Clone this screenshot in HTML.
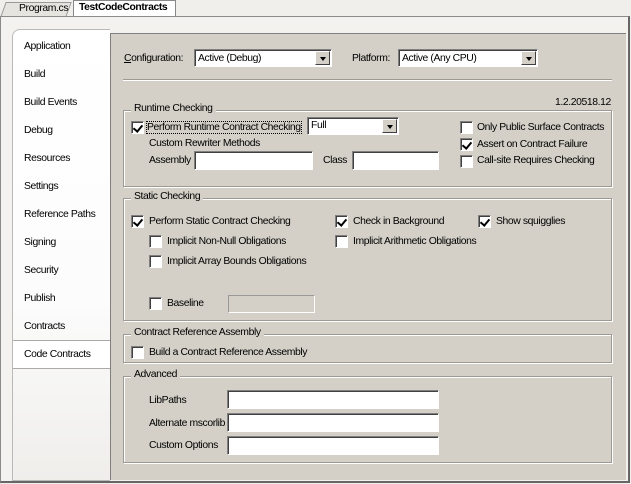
<!DOCTYPE html>
<html><head><style>
*{margin:0;padding:0;box-sizing:border-box}
body{width:631px;height:484px;background:#f0efec;font-family:"Liberation Sans",sans-serif;font-size:10.4px;color:#000;position:relative;overflow:hidden;letter-spacing:-0.4px}
.a{position:absolute;white-space:nowrap}
.frame{position:absolute;left:0;top:16px;width:630px;height:467px;border:1px solid #8a8a8a;background:#f3f2ef;border-right:2px solid #666;border-bottom:2px solid #666}
.left{position:absolute;left:12px;top:29px;width:98px;height:452px;background:linear-gradient(#fff,#fcfcfc 60%,#efeeeb);border:1px solid #b9b9b9;border-radius:8px 0 0 0;border-right:none}
.panel{position:absolute;left:110px;top:33px;width:516px;height:447px;background:#d4d0c8;border-left:1px solid #808080;border-top:1px solid #808080}
.grp{position:absolute;border:1px solid #9d9a94;box-shadow:1px 1px 0 #fff inset,1px 1px 0 #fff}
.lg{position:absolute;top:-8px;left:7px;background:#d4d0c8;padding:0 3px}
.tb{position:absolute;background:#fff;border:1px solid;border-color:#808080 #fff #fff #808080;box-shadow:inset 1px 1px 0 #404040}
.tb.dis{background:#d4d0c8}
.cb{position:absolute;width:13px;height:13px;background:#fff;border:1px solid;border-color:#808080 #fff #fff #808080;box-shadow:inset 1px 1px 0 #404040}
.cb.on::after{content:"";position:absolute;left:3px;top:1px;width:4px;height:7px;border:solid #000;border-width:0 2px 2px 0;transform:rotate(40deg)}
.dd{position:absolute;right:1px;top:1px;width:15px;bottom:1px;background:#d4d0c8;border:1px solid;border-color:#fff #404040 #404040 #fff}
.dd::after{content:"";position:absolute;left:4px;top:5px;border:3px solid transparent;border-top:4px solid #000;border-bottom:0}
.li{position:absolute;left:24px}
</style></head><body>
<div class="a" style="left:3px;top:2px;width:66px;height:15px;background:#e6e4df;border:1px solid #999;border-bottom:none;transform:skewX(-20deg)"></div>
<div class="a" style="left:19px;top:3px">Program.cs</div>
<div class="a" style="left:73px;top:0;width:103px;height:17px;background:#fff;border:1px solid #888;border-bottom:none"></div>
<div class="a" style="left:79px;top:2px;font-weight:bold">TestCodeContracts</div>
<div class="frame"></div>
<div class="left"></div>
<div class="li a" style="top:41px">Application</div>
<div class="li a" style="top:69px">Build</div>
<div class="li a" style="top:97px">Build Events</div>
<div class="li a" style="top:125px">Debug</div>
<div class="li a" style="top:153px">Resources</div>
<div class="li a" style="top:181px">Settings</div>
<div class="li a" style="top:209px">Reference Paths</div>
<div class="li a" style="top:237px">Signing</div>
<div class="li a" style="top:265px">Security</div>
<div class="li a" style="top:293px">Publish</div>
<div class="li a" style="top:321px">Contracts</div>
<div class="a" style="left:13px;top:340px;width:97px;height:29px;background:#fff;border-top:1px solid #aaa;border-bottom:1px solid #aaa"></div>
<div class="li a" style="top:349px">Code Contracts</div>
<div class="panel"></div>
<div class="a" style="left:124px;top:53px"><u>C</u>onfiguration:</div>
<div class="tb" style="left:194px;top:49px;width:138px;height:18px"><span class="a" style="left:3px;top:3px">Active (Debug)</span><div class="dd"></div></div>
<div class="a" style="left:352px;top:53px">Platform:</div>
<div class="tb" style="left:398px;top:49px;width:140px;height:18px"><span class="a" style="left:3px;top:3px">Active (Any CPU)</span><div class="dd"></div></div>
<div class="a" style="left:123px;top:79px;width:489px;height:2px;border-top:1px solid #9d9a94;border-bottom:1px solid #fff"></div>
<div class="a" style="left:555px;top:97px">1.2.20518.12</div>
<div class="grp" style="left:123px;top:110px;width:489px;height:77px"><span class="lg">Runtime Checking</span></div>
<div class="cb on" style="left:131px;top:121px"></div>
<div class="a" style="left:147px;top:122px;outline:1px dotted #000">Perform Runtime Contract Checking</div>
<div class="tb" style="left:307px;top:117px;width:92px;height:18px"><span class="a" style="left:3px;top:2px">Full</span><div class="dd"></div></div>
<div class="a" style="left:149px;top:138px">Custom Rewriter Methods</div>
<div class="a" style="left:149px;top:155px">Assembly</div>
<div class="tb" style="left:194px;top:151px;width:119px;height:19px"></div>
<div class="a" style="left:323px;top:155px">Class</div>
<div class="tb" style="left:352px;top:151px;width:87px;height:19px"></div>
<div class="cb" style="left:460px;top:121px"></div><div class="a" style="left:477px;top:122px">Only Public Surface Contracts</div>
<div class="cb on" style="left:460px;top:138px"></div><div class="a" style="left:477px;top:139px">Assert on Contract Failure</div>
<div class="cb" style="left:460px;top:155px"></div><div class="a" style="left:477px;top:155px">Call-site Requires Checking</div>
<div class="grp" style="left:123px;top:198px;width:489px;height:123px"><span class="lg">Static Checking</span></div>
<div class="cb on" style="left:131px;top:215px"></div><div class="a" style="left:149px;top:216px">Perform Static Contract Checking</div>
<div class="cb" style="left:149px;top:235px"></div><div class="a" style="left:167px;top:236px">Implicit Non-Null Obligations</div>
<div class="cb" style="left:149px;top:255px"></div><div class="a" style="left:167px;top:256px">Implicit Array Bounds Obligations</div>
<div class="cb on" style="left:335px;top:215px"></div><div class="a" style="left:353px;top:216px">Check in Background</div>
<div class="cb" style="left:335px;top:235px"></div><div class="a" style="left:353px;top:236px">Implicit Arithmetic Obligations</div>
<div class="cb on" style="left:478px;top:215px"></div><div class="a" style="left:496px;top:216px">Show squigglies</div>
<div class="cb" style="left:149px;top:297px"></div><div class="a" style="left:167px;top:298px">Baseline</div>
<div class="tb dis" style="left:228px;top:295px;width:87px;height:18px;box-shadow:none;border-color:#999 #fff #fff #999"></div>
<div class="grp" style="left:123px;top:334px;width:489px;height:29px"><span class="lg">Contract Reference Assembly</span></div>
<div class="cb" style="left:131px;top:346px"></div><div class="a" style="left:149px;top:347px">Build a Contract Reference Assembly</div>
<div class="grp" style="left:123px;top:376px;width:489px;height:87px"><span class="lg">Advanced</span></div>
<div class="a" style="left:149px;top:395px">LibPaths</div>
<div class="tb" style="left:227px;top:390px;width:212px;height:19px"></div>
<div class="a" style="left:149px;top:418px">Alternate mscorlib</div>
<div class="tb" style="left:227px;top:413px;width:212px;height:19px"></div>
<div class="a" style="left:149px;top:440px">Custom Options</div>
<div class="tb" style="left:227px;top:436px;width:212px;height:19px"></div>
</body></html>
